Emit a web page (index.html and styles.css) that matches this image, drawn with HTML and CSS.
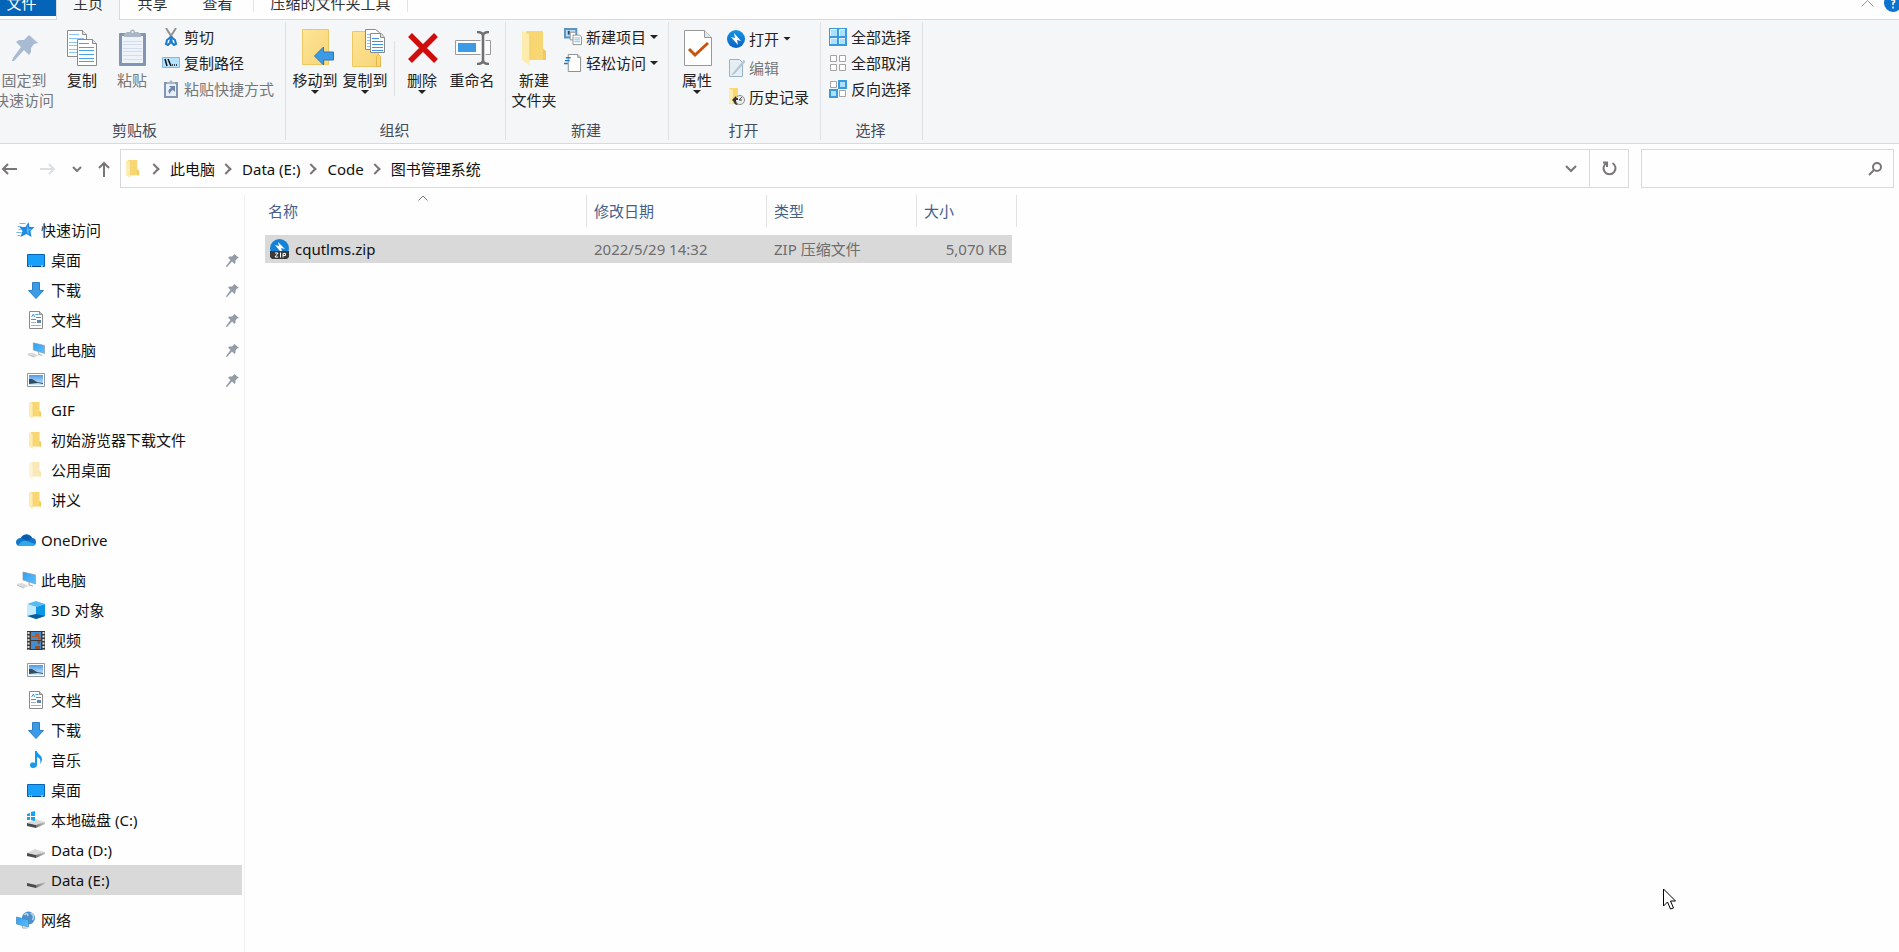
FILE: index.html
```html
<!DOCTYPE html>
<html lang="zh-CN">
<head>
<meta charset="utf-8">
<title>图书管理系统</title>
<link rel="stylesheet" href="styles.css">
</head>
<body>
<svg class="sprite" aria-hidden="true">
  <defs>
    <linearGradient id="g-folder" x1="0" x2="1" y1="0" y2="1"><stop offset="0" stop-color="#ffe596"/><stop offset="1" stop-color="#f7d478"/></linearGradient>
    <linearGradient id="g-screen" x1="0" x2="1" y1="0" y2="1"><stop offset="0" stop-color="#2f9df0"/><stop offset="1" stop-color="#5ec1ff"/></linearGradient>
    <linearGradient id="g-disc" x1="0" x2="0" y1="0" y2="1"><stop offset="0" stop-color="#1495e6"/><stop offset="1" stop-color="#0a63c4"/></linearGradient>
    <linearGradient id="g-drive" x1="0" x2="1"><stop offset="0" stop-color="#777"/><stop offset="1" stop-color="#c4c4c4"/></linearGradient>
    <linearGradient id="g-photo" x1="0" x2="0" y1="0" y2="1"><stop offset="0" stop-color="#4d9ce6"/><stop offset="1" stop-color="#d5eafa"/></linearGradient>
  </defs>
  <symbol id="pin" viewBox="0 0 26 26"><path d="M17 0l9 8-4 1-3 4v4l-2 3-5-5L2 26H0l1-3 8-11-5-5 3-2h5l3-3z" fill="currentColor"/></symbol>
  <symbol id="copy" viewBox="0 0 30 36">
    <path d="M.5.500h15l4 4v22H.5z" fill="#fff" stroke="#8b8b8b"/><path d="M15.500.5v4h4" fill="#e6e6e6" stroke="#8b8b8b"/>
    <path d="M2 4.500h10M2 8.500h15M2 12.500h8M2 15.500h8M2 19.500h8M2 22.500h8" stroke="#8cc4f5"/>
    <path d="M10.500 9.500h15l4 4v22h-19z" fill="#fff" stroke="#8b8b8b"/><path d="M25.500 9.500v4h4" fill="#e6e6e6" stroke="#8b8b8b"/>
    <path d="M12 13.500h10M12 17.500h15M12 20.500h15M12 24.500h15M12 28.500h15M12 31.500h15" stroke="#4ba0ee"/>
  </symbol>
  <symbol id="paste" viewBox="0 0 27 37">
    <rect y="4" width="27" height="33" rx="1" fill="#8296b4"/><path d="M3 7h21v27H3z" fill="#eef2f9"/>
    <path d="M4 12.500h19M4 15.500h19M4 19.500h19M4 22.500h19M4 26.500h19M4 30.500h19" stroke="#d2dcec"/>
    <path d="M5 8V5l3-2h3a2.500 2.500 0 015 0h3l3 2v3z" fill="#a9b6c6"/><circle cx="13.500" cy="3" r="1" fill="#eef2f9"/>
  </symbol>
  <symbol id="cut" viewBox="0 0 18 18">
    <path d="M4 0l7 11M14 0L7 11" stroke="#929292" stroke-width="2" fill="none"/>
    <path d="M9 9l-4 3-1 4 2 1 2-2 1-4 1 4 2 2 2-1-1-4z" fill="none" stroke="#1779cf" stroke-width="2"/>
  </symbol>
  <symbol id="path" viewBox="0 0 18 18"><path d="M.5 3.500h17v10H.5z" fill="#b5e2fd" stroke="#83b9e0"/><path d="M3 5l2 7M6 5l3 7" stroke="#111" stroke-width="1.500"/><path d="M10 11h1m1 0h1m1 0h1" stroke="#111" stroke-width="1.500"/></symbol>
  <symbol id="shortcut" viewBox="0 0 18 18"><path d="M3 3h12v14H3z" fill="#e9eff7" stroke="#8296b4" stroke-width="2"/><path d="M5 4V2h2l2-2 2 2h2v2z" fill="#a9b6c6"/><path d="M7 6h6v6l-2-2c-2 1-3 2-3 4-3-3-1-5 1-6z" fill="#6f87ab"/></symbol>
  <symbol id="move" viewBox="0 0 32 37"><path d="M.5.500h26v35H.5z" fill="url(#g-folder)" stroke="#edc760"/><path d="M22.500 35.500v-11l2-2 2 2v11" fill="#fbdc82" stroke="#edc760"/><path d="M12.500 27l9-9v5h10v8h-10v5z" fill="#3b9be7" stroke="#2b78bd"/></symbol>
  <symbol id="copyto" viewBox="0 0 33 38"><path d="M.5 2.500h26v35H.5z" fill="url(#g-folder)" stroke="#edc760"/><path d="M24.500 37.500v-10l2-2 2 2v10z" fill="#f9d878" stroke="#e2b64c"/>
    <path d="M13.500.500h10l4 3v17h-14z" fill="#fff" stroke="#8b8b8b"/><path d="M15 5.500h4M15 8.500h4M15 11.500h4M15 14.500h4M15 17.500h4" stroke="#8cc4f5"/>
    <path d="M18.500 4.500h11l3 4v15h-14z" fill="#fff" stroke="#8b8b8b"/><path d="M28.500 4.500v4h4" fill="#ddd" stroke="#8b8b8b"/><path d="M20 9.500h7M20 12.500h11M20 15.500h11M20 18.500h11M20 21.500h11" stroke="#3d94e6"/></symbol>
  <symbol id="delete" viewBox="0 0 32 32"><path d="M3 3l26 26M29 3L3 29" stroke="#cf0d0d" stroke-width="5.500"/></symbol>
  <symbol id="rename" viewBox="0 0 36 34"><path d="M.5 9.500h35v14H.5z" fill="#fff" stroke="#9a9a9a"/><path d="M3 12h18v9H3z" fill="#3b9be7"/><path d="M28 3v28" stroke="#f4f6f8" stroke-width="5"/><path d="M22 1c4 0 6 1 6 4v24c0 3-2 4-6 4m12-32c-4 0-6 1-6 4m0 24c0 3 2 4 6 4" fill="none" stroke="#707070" stroke-width="2.500"/></symbol>
  <symbol id="folder" viewBox="0 0 24 34"><path d="M4 0h17v18l3 2v9H4z" fill="#f8d672"/><path d="M21 18v11h3v-9z" fill="#f2c95d"/><path d="M0 0l8 4v25l-1 5-7-5z" fill="#feebae"/><path d="M8 4v25" stroke="#f0c967"/></symbol>
  <symbol id="newitem" viewBox="0 0 19 19"><path d="M1 1h12v9H1z" fill="#b9dcf5" stroke="#5e93bd" stroke-width="2"/><path d="M4 3h2v4H4z" fill="#31495f"/><path d="M6.500 4.500h6v8h-6z" fill="#fff" stroke="#8e8e8e"/><path d="M9.500 7.500h7l2 2v8h-9z" fill="#fff" stroke="#8e8e8e"/><path d="M11 10.500h6M11 12.500h6M11 14.500h6" stroke="#76bce0"/></symbol>
  <symbol id="access" viewBox="0 0 19 19"><path d="M4.500.500h10l3 3v15h-13z" fill="#fff" stroke="#8b8b8b"/><path d="M14.500.5v3h3" fill="#ddd" stroke="#8b8b8b"/><path d="M2 4h5M1 7h5M0 10h4" stroke="#1379c9" stroke-width="1.500"/></symbol>
  <symbol id="props" viewBox="0 0 28 36"><path d="M.5.500h20l7 7v28H.5z" fill="#fff" stroke="#999"/><path d="M20.500.5v7h7" fill="#e6e6e6" stroke="#999"/><path d="M5 19l6 6 13-12" fill="none" stroke="#c8540b" stroke-width="3"/></symbol>
  <symbol id="bolt" viewBox="0 0 18 18"><circle cx="9" cy="9" r="9" fill="url(#g-disc)"/><path d="M7 3l1 5-4-1 7 8-1-5 4 1z" fill="#fff"/></symbol>
  <symbol id="edit" viewBox="0 0 18 18"><path d="M2.500.500h10l3 3v14h-13z" fill="#e5edf5" stroke="#9bb0cb"/><path d="M17 1L7 13l-2 3 3-2L18 3z" fill="#b9cbd3" stroke="#a2b6c1" stroke-width=".5"/></symbol>
  <symbol id="history" viewBox="0 0 18 18"><path d="M2 0h9v8l2 1v7H2z" fill="#f8d672"/><path d="M2 0l4 2v12l-1 3-3-2z" fill="#feebae"/><circle cx="13" cy="12" r="4.500" fill="#eee" stroke="#8a8a8a"/><path d="M12 12l3-3m-3 3h3" stroke="#444"/><path d="M5 12l4-4v2h2v2H9c0 2 0 3 2 5-3 0-4-2-4-3z" fill="#333"/></symbol>
  <symbol id="selall" viewBox="0 0 18 18"><path d="M0 0h18v18H0z" fill="#3a9ae0"/><path d="M2 2h6v6H2zM10 2h6v6h-6zM2 10h6v6H2zM10 10h6v6h-6z" fill="#ace0fd"/><path d="M1.500 8V1.500H8M10.500 8V1.500H16M1.500 16v-5.500H8M10.500 16v-5.500H16" fill="none" stroke="#e6f5fe"/></symbol>
  <symbol id="selnone" viewBox="0 0 18 18"><path d="M1.500 1.500h6v6h-6zM10.500 1.500h6v6h-6zM1.500 10.500h6v6h-6zM10.500 10.500h6v6h-6z" fill="#fff" stroke="#a4a4a4"/></symbol>
  <symbol id="selinv" viewBox="0 0 18 18"><path d="M1.500 1.500h6v6h-6zM10.500 10.500h6v6h-6z" fill="#fff" stroke="#a4a4a4"/><path d="M10 1h7v7h-7zM1 10h7v7H1z" fill="#ace0fd" stroke="#3a9ae0" stroke-width="2"/></symbol>
  <symbol id="star" viewBox="0 0 19 18"><path d="M12 1l1 5h5l-4 4 1 6-5-3-6 3 2-6-3-4h6z" fill="#1f8ae4"/><path d="M11 4l1 4h4l-4 2 1 4-3-3z" fill="#4fb4fa"/><path d="M3 2.500h6M1 5.500h4M2 8.500h3M0 11.500h5M1 14.500h3" stroke="#70b7ee"/></symbol>
  <symbol id="desktop" viewBox="0 0 18 18"><path d="M.5 3.500h17v12H.5z" fill="#18a0fb" stroke="#0865b5"/><path d="M1 15.500h16" stroke="#074c89"/><path d="M2 15h1m1 0h1m9 0h2" stroke="#fff"/></symbol>
  <symbol id="down" viewBox="0 0 18 18"><path d="M5.500 1.500h7v8h4L9 17.500 1.500 9.500h4z" fill="#3b9be7" stroke="#2e7fc4"/></symbol>
  <symbol id="doc" viewBox="0 0 18 18"><path d="M2.500.500h10l3 3v14h-13z" fill="#fff" stroke="#8b8b8b"/><path d="M12.500.5v3h3" fill="#ccc" stroke="#8b8b8b"/><path d="M4.500 6l2-3 1 3m1-2.500h3M9 6.500h5M4 8.500h5" fill="none" stroke="#3a98e3"/><path d="M10 9h4v3h-4z" fill="#6585a8"/><path d="M4 11.500h5M4 14.500h10" stroke="#9fb4c9"/></symbol>
  <symbol id="pc" viewBox="0 0 20 18"><path d="M7 1l12.500 3v9L7 9z" fill="url(#g-screen)" stroke="#8799a9" stroke-width=".7"/><path d="M13 11v3l4 1" fill="none" stroke="#9aa3ab"/><path d="M0 13l6-1 7 3-5 2z" fill="#d9dbdd"/><path d="M1 14l7 3" stroke="#bbb"/></symbol>
  <symbol id="picture" viewBox="0 0 18 18"><path d="M.5 2.500h17v13H.5z" fill="#fff" stroke="#8f9aa5"/><path d="M2 4h14v10H2z" fill="url(#g-photo)"/><path d="M2 8l3 0 5 3 6 1v1l-5-1-9 1z" fill="#314d62"/></symbol>
  <symbol id="cloud" viewBox="0 0 20 14"><path d="M5 5a6 6 0 0111 0c3 0 4 2 4 4 0 3-2 4-4 4H4c-3 0-4-2-4-4s2-4 5-4z" fill="#1277ca"/><path d="M5 5a6 6 0 0111 0l-5 3z" fill="#0b5cac"/><path d="M2 12c3-4 6-5 9-4l8 3c0 1-2 2-3 2H4z" fill="#31a8ed"/></symbol>
  <symbol id="cube" viewBox="0 0 18 18"><path d="M0 3l9-3 9 3-9 3z" fill="#57b9f5"/><path d="M0 3l9 3v12l-9-3z" fill="#c3ebfc"/><path d="M9 6l9-3v12l-9 3z" fill="#0a98e5"/><path d="M0 15l9-2 9 2-9 3z" fill="#075ca3"/></symbol>
  <symbol id="video" viewBox="0 0 18 19"><path d="M0 0h18v19H0z" fill="#3b3b3b"/><path d="M1.500 1v18M16.500 1v18" stroke="#ddd" stroke-width="2" stroke-dasharray="2 1.500"/><path d="M4 1h10v8H4zM4 10h10v8H4z" fill="#438dd0"/><path d="M8 2h4v3l2 3h-3V6H5V5h3z" fill="#b8592b"/><path d="M8 15h5v3H8zM10 10h3v3h-2z" fill="#9a5024"/></symbol>
  <symbol id="music" viewBox="0 0 18 18"><path d="M8 0h2c0 3 5 4 5 8 0 2-1 4-2 5 1-4 0-6-3-7v8c0 2-2 3-4 3s-3-1-3-3 2-3 5-2z" fill="#149ae9"/></symbol>
  <symbol id="drive" viewBox="0 0 18 18"><path d="M0 12l8-4 10 3-8 3z" fill="#dadada"/><path d="M0 12l9 2v3l-9-2z" fill="#4b4b4b"/><path d="M9 14l9-3v2l-9 4z" fill="url(#g-drive)"/></symbol>
  <symbol id="sysdrive" viewBox="0 0 18 18"><use href="#drive"/><path d="M0 3l3-1v3H0zM4 1l4-1v5H4zM0 6h3v3H0zM4 6h4v4L4 9z" fill="#11a4f3"/></symbol>
  <symbol id="net" viewBox="0 0 19 18"><circle cx="12" cy="7" r="6.500" fill="#4e90c9"/><path d="M8 4c3-3 4 0 3 1M14 2c3 1 4 4 2 7" fill="none" stroke="#b3d8ef" stroke-width="1.500"/><path d="M0 6l12 3v7L0 13z" fill="url(#g-screen)" stroke="#418bc1" stroke-width=".7"/><path d="M6 15v2h5" stroke="#aaa" fill="none"/></symbol>
  <symbol id="zip" viewBox="0 0 19 20"><circle cx="9.500" cy="9.500" r="9.500" fill="#1182d8"/><path d="M8 3l1 4-4-1 5 6h2l-1-3 4 1z" fill="#fff"/><path d="M0 12h19v6l-2 2H2l-2-2z" fill="#3a3a3a"/><path d="M5 14h3l-3 4h3M10.500 13.500v5M13 18.500v-4h2.500v2H13" fill="none" stroke="#fff"/></symbol>
</svg>

<header>
  <nav class="tabs" aria-label="功能区选项卡">
    <button class="tab tab-file">文件</button>
    <button class="tab tab-active">主页</button>
    <button class="tab">共享</button>
    <button class="tab">查看</button>
    <button class="tab tab-tool">压缩的文件夹工具</button>
    <span class="tabs-end">
      <button class="plain" aria-label="最小化功能区"><svg width="13" height="7"><path d="M.5 6.500l6-6 6 6" fill="none" stroke="#999"/></svg></button>
      <button class="plain help" aria-label="帮助"><svg width="15" height="12"><circle cx="9" cy="3" r="9" fill="#0a74d0"/><path d="M7 0h3.500v2L9 3v2M9 6.500v2" fill="none" stroke="#fff" stroke-width="1.500"/></svg></button>
    </span>
  </nav>

  <div class="ribbon">
    <section class="group group-clip">
      <div class="tools">
        <button class="big big-wide off"><span class="pic pic-near"><svg class="pin-big" width="26" height="26"><use href="#pin"/></svg></span>固定到<br>快速访问</button>
        <button class="big"><span class="pic"><svg width="30" height="36"><use href="#copy"/></svg></span>复制</button>
        <button class="big off"><span class="pic"><svg width="27" height="37"><use href="#paste"/></svg></span>粘贴</button>
        <div class="stack">
          <button class="small"><svg width="18" height="18"><use href="#cut"/></svg>剪切</button>
          <button class="small"><svg width="18" height="18"><use href="#path"/></svg>复制路径</button>
          <button class="small off"><svg width="18" height="18"><use href="#shortcut"/></svg>粘贴快捷方式</button>
        </div>
      </div>
      <h2>剪贴板</h2>
    </section>
    <section class="group group-organize">
      <div class="tools">
        <button class="big"><span class="pic pic-far"><svg width="32" height="37"><use href="#move"/></svg></span>移动到<i class="caret"></i></button>
        <button class="big"><span class="pic pic-far"><svg width="33" height="38"><use href="#copyto"/></svg></span>复制到<i class="caret"></i></button>
        <span class="divider"></span>
        <button class="big"><span class="pic pic-near"><svg width="32" height="32"><use href="#delete"/></svg></span>删除<i class="caret"></i></button>
        <button class="big"><span class="pic pic-near"><svg width="36" height="34"><use href="#rename"/></svg></span>重命名</button>
      </div>
      <h2>组织</h2>
    </section>
    <section class="group group-new">
      <div class="tools">
        <button class="big"><span class="pic"><svg width="24" height="34"><use href="#folder"/></svg></span>新建<br>文件夹</button>
        <div class="stack">
          <button class="small"><svg width="18" height="18"><use href="#newitem"/></svg>新建项目<i class="caret"></i></button>
          <button class="small"><svg width="18" height="18"><use href="#access"/></svg>轻松访问<i class="caret"></i></button>
        </div>
      </div>
      <h2>新建</h2>
    </section>
    <section class="group group-open">
      <div class="tools">
        <button class="big"><span class="pic pic-near"><svg width="28" height="36"><use href="#props"/></svg></span>属性<i class="caret"></i></button>
        <div class="stack stack-loose">
          <button class="small"><svg width="18" height="18"><use href="#bolt"/></svg>打开<i class="caret"></i></button>
          <button class="small off"><svg width="18" height="18"><use href="#edit"/></svg>编辑</button>
          <button class="small"><svg width="18" height="18"><use href="#history"/></svg>历史记录</button>
        </div>
      </div>
      <h2>打开</h2>
    </section>
    <section class="group group-select">
      <div class="tools">
        <div class="stack">
          <button class="small"><svg width="18" height="18"><use href="#selall"/></svg>全部选择</button>
          <button class="small"><svg width="18" height="18"><use href="#selnone"/></svg>全部取消</button>
          <button class="small"><svg width="18" height="18"><use href="#selinv"/></svg>反向选择</button>
        </div>
      </div>
      <h2>选择</h2>
    </section>
  </div>
</header>

<div class="bar">
  <div class="history">
    <button class="plain" aria-label="后退"><svg width="16" height="16"><path d="M16 8H2M7 3L2 8l5 5" fill="none" stroke="#7b7575" stroke-width="2"/></svg></button>
    <button class="plain" aria-label="前进"><svg width="16" height="16"><path d="M0 8h14M9 3l5 5-5 5" fill="none" stroke="#dcdfe2" stroke-width="2"/></svg></button>
    <button class="plain" aria-label="最近浏览的位置"><svg width="10" height="6"><path d="M1 1l4 4 4-4" fill="none" stroke="#7b7575" stroke-width="2"/></svg></button>
    <button class="plain" aria-label="上移"><svg width="12" height="16"><path d="M6 16V2M1 7l5-5 5 5" fill="none" stroke="#7b7575" stroke-width="2"/></svg></button>
  </div>
  <div class="address">
    <svg width="13" height="18"><use href="#folder"/></svg>
    <nav class="crumbs" aria-label="路径">
      <a href="#pc">此电脑</a><a href="#e">Data (E:)</a><a href="#code">Code</a><a href="#lib">图书管理系统</a>
    </nav>
    <button class="plain drop" aria-label="以前的位置"><svg width="12" height="8"><path d="M1 1l5 5 5-5" fill="none" stroke="#7b7575" stroke-width="2"/></svg></button>
    <button class="plain refresh" aria-label="刷新"><svg width="15" height="15"><path d="M10.500 2a6 6 0 11-6 0M1 1.500h4V6" fill="none" stroke="#7b7575" stroke-width="2"/></svg></button>
  </div>
  <label class="search">
    <input type="text" aria-label="搜索">
    <svg width="14" height="14"><circle cx="9" cy="5" r="4" fill="none" stroke="#7b7575" stroke-width="2"/><path d="M6 8l-5 5" stroke="#7b7575" stroke-width="2"/></svg>
  </label>
</div>

<main class="body">
  <nav class="tree" aria-label="导航窗格">
    <ul>
      <li><a class="root" href="#quick"><svg width="20" height="18"><use href="#star"/></svg>快速访问</a></li>
      <li><a href="#t"><svg width="18" height="18"><use href="#desktop"/></svg>桌面<svg class="pinned" width="13" height="13"><use href="#pin"/></svg></a></li>
      <li><a href="#t"><svg width="18" height="18"><use href="#down"/></svg>下载<svg class="pinned" width="13" height="13"><use href="#pin"/></svg></a></li>
      <li><a href="#t"><svg width="18" height="18"><use href="#doc"/></svg>文档<svg class="pinned" width="13" height="13"><use href="#pin"/></svg></a></li>
      <li><a href="#t"><svg width="18" height="18"><use href="#pc"/></svg>此电脑<svg class="pinned" width="13" height="13"><use href="#pin"/></svg></a></li>
      <li><a href="#t"><svg width="18" height="18"><use href="#picture"/></svg>图片<svg class="pinned" width="13" height="13"><use href="#pin"/></svg></a></li>
      <li><a href="#t"><svg width="16" height="17" class="fold"><use href="#folder"/></svg>GIF</a></li>
      <li><a href="#t"><svg width="16" height="17" class="fold"><use href="#folder"/></svg>初始游览器下载文件</a></li>
      <li><a href="#t"><svg width="16" height="17" class="fold faded"><use href="#folder"/></svg>公用桌面</a></li>
      <li><a href="#t"><svg width="16" height="17" class="fold"><use href="#folder"/></svg>讲义</a></li>
    </ul>
    <ul>
      <li><a class="root" href="#t"><svg width="20" height="14"><use href="#cloud"/></svg>OneDrive</a></li>
    </ul>
    <ul>
      <li><a class="root" href="#t"><svg width="20" height="18"><use href="#pc"/></svg>此电脑</a></li>
      <li><a href="#t"><svg width="18" height="18"><use href="#cube"/></svg>3D 对象</a></li>
      <li><a href="#t"><svg width="18" height="19"><use href="#video"/></svg>视频</a></li>
      <li><a href="#t"><svg width="18" height="18"><use href="#picture"/></svg>图片</a></li>
      <li><a href="#t"><svg width="18" height="18"><use href="#doc"/></svg>文档</a></li>
      <li><a href="#t"><svg width="18" height="18"><use href="#down"/></svg>下载</a></li>
      <li><a href="#t"><svg width="18" height="18"><use href="#music"/></svg>音乐</a></li>
      <li><a href="#t"><svg width="18" height="18"><use href="#desktop"/></svg>桌面</a></li>
      <li><a href="#t"><svg width="18" height="18"><use href="#sysdrive"/></svg>本地磁盘 (C:)</a></li>
      <li><a href="#t"><svg width="18" height="18"><use href="#drive"/></svg>Data (D:)</a></li>
      <li><a class="current" href="#t"><svg width="18" height="18"><use href="#drive"/></svg>Data (E:)</a></li>
    </ul>
    <ul>
      <li><a class="root" href="#t"><svg width="20" height="18"><use href="#net"/></svg>网络</a></li>
    </ul>
  </nav>

  <section class="files">
    <table>
      <thead>
        <tr>
          <th class="c-name">名称<svg class="sort" width="10" height="6"><path d="M.5 5.500l4.500-4.500 4.500 4.500" fill="none" stroke="#777"/></svg></th>
          <th class="c-date">修改日期</th>
          <th class="c-type">类型</th>
          <th class="c-size">大小</th>
        </tr>
      </thead>
      <tbody>
        <tr>
          <td class="name"><span class="file"><svg width="19" height="20"><use href="#zip"/></svg>cqutlms.zip</span></td>
          <td>2022/5/29 14:32</td>
          <td>ZIP 压缩文件</td>
          <td class="size">5,070 KB</td>
        </tr>
      </tbody>
    </table>
  </section>
</main>
<svg class="pointer" width="14" height="23" aria-hidden="true"><path d="M.5 1v17l4-4 3 7 3-1-3-7h5z" fill="#fff" stroke="#000"/></svg>
</body>
</html>
```
FILE: styles.css
```css
* { box-sizing: border-box; }

body {
  margin: 0;
  min-height: 100vh;
  display: flex;
  flex-direction: column;
  background: #fefefe;
  color: #111;
  font: 15px/20px "Noto Sans", "Noto Sans CJK SC", sans-serif;
}

.sprite { position: absolute; width: 0; height: 0; }
svg { display: block; flex: none; }
button { font: inherit; color: inherit; background: none; border: 0; padding: 0; margin: 0; }
a { color: inherit; text-decoration: none; }
ul { list-style: none; margin: 0; padding: 0; }

/* tabs */
.tabs { display: flex; height: 20px; border-bottom: 1px solid #d9dadc; }
.tab { width: 65px; height: 16px; line-height: 6px; color: #333; display: flex; align-items: flex-start; justify-content: center; white-space: nowrap; }
.tab-file { width: 56px; padding-right: 13px; background: #0364b8; color: #fff; }
.tab-active { width: 64px; height: 20px; background: #f4f6f8; border: solid #d9dadc; border-width: 0 1px; }
.tab-tool { height: 12px; width: 155px; margin-left: 3px; border: solid #e2e3e5; border-width: 0 1px; }
.tabs-end { display: flex; margin-left: auto; gap: 10px; align-items: flex-start; }

/* ribbon */
.ribbon { display: flex; padding: 2px 0 3px; background: #f4f6f8; border-bottom: 1px solid #d9dadc; }
.group { display: flex; flex-direction: column; height: 118px; border-right: 1px solid #dfe1e4; flex: none; }
.group h2 { margin: auto 2px 0 0; font-size: 15px; line-height: 20px; font-weight: 400; text-align: center; color: #444c5c; }
.tools { display: flex; padding: 0 3px; }
.group-clip { width: 300px; margin-left: -14px; }
.group-clip .tools { padding-left: 5px; }
.group-organize { width: 220px; }
.group-organize .tools { padding-left: 4px; }
.group-new { width: 163px; }
.group-open { width: 152px; }
.group-select { width: 102px; }
.big { display: block; width: 50px; padding-top: 7px; text-align: center; align-self: flex-start; white-space: nowrap; color: #222; }
.big-wide { width: 66px; }
.pic { display: flex; justify-content: center; align-items: center; height: 37px; margin-bottom: 4px; }
.pic-near { padding-left: 2px; }
.pic-far { padding-left: 6px; }
.pin-big { color: #a9bad3; }
.off, .big.off { color: #777; }
.caret { display: block; width: 8px; height: 4px; background: #222; clip-path: polygon(0 0, 100% 0, 50% 100%); }
.big .caret { margin: 0 auto; }
.divider { width: 1px; height: 55px; margin: 19px 2px 0 4px; background: #dfe1e4; }
.stack { display: flex; flex-direction: column; align-items: flex-start; padding: 2px 0 0 5px; }
.small { display: flex; align-items: center; gap: 4px; height: 26px; white-space: nowrap; }
.small:not(.off) { color: #222; }
.stack-loose .small { height: 29px; }

/* address bar */
.bar { display: flex; padding: 5px 5px 7px 0; }
.history { display: flex; align-items: center; width: 120px; padding-left: 1px; gap: 0 16px; }
.history .plain:nth-child(2) { margin-left: 7px; }
.address { flex: 1; display: flex; align-items: center; height: 39px; padding-left: 5px; border: 1px solid #d9d9d9; }
.crumbs { display: flex; flex: 1; color: #111; padding-left: 3px; }
.crumbs a { display: flex; align-items: center; }
.crumbs a::before { content: ""; width: 6px; height: 6px; margin: 0 12px 0 8px; border: solid #7b7575; border-width: 2px 2px 0 0; transform: rotate(45deg); }
.crumbs a + a::before { margin-left: 7px; }
.drop { margin-right: 12px; }
.refresh { width: 39px; height: 37px; display: grid; place-items: center; border-left: 1px solid #d9d9d9; }
.search { width: 253px; margin-left: 12px; padding-right: 11px; display: flex; align-items: center; border: 1px solid #d9d9d9; }
.search input { flex: 1; min-width: 0; border: 0; outline: 0; background: none; font: inherit; }

/* content */
.body { flex: 1; display: flex; }
.tree { width: 245px; padding: 20px 2px 0 0; border-right: 1px solid #f0f0f0; flex: none; }
.tree ul + ul { margin-top: 10px; }
.tree a { display: flex; align-items: center; height: 30px; padding-left: 27px; gap: 6px; }
.tree .root { padding-left: 16px; gap: 5px; }
.tree .current { background: #d9d9d9; }
.tree .pinned { margin-left: auto; margin-right: 3px; color: #949ca8; }
.fold { margin-right: 2px; }
.faded { opacity: .5; }

.files { flex: 1; padding-left: 20px; }
table { border-spacing: 0; table-layout: fixed; width: 752px; }
th { position: relative; height: 32px; padding: 0 7px; border-right: 1px solid #e2e2e2; text-align: left; font-weight: 400; color: #44608a; }
.c-name { width: 322px; padding-left: 3px; }
.c-date { width: 180px; }
.c-type { width: 150px; }
.sort { position: absolute; top: 0; left: calc(50% - 8px); }
tbody::before { content: ""; display: block; height: 8px; }
td { height: 28px; padding: 0 7px; background: #d9d9d9; color: #6d6d6d; }
.name { padding-left: 5px; color: #111; }
.file { display: flex; align-items: center; gap: 6px; }
.size { text-align: right; padding-right: 5px; border-right: 5px solid #fefefe; }

.pointer { position: absolute; left: 1663px; top: 888px; }
```
